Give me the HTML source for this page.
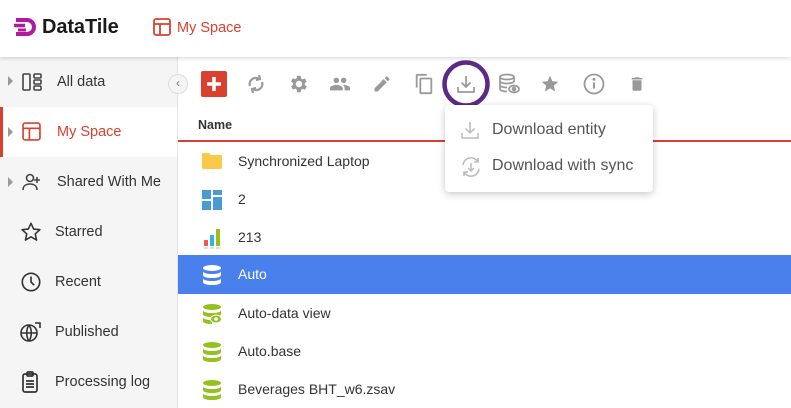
<!DOCTYPE html>
<html><head><style>
*{margin:0;padding:0;box-sizing:border-box}
body{width:791px;height:408px;overflow:hidden;background:#fff;font-family:"Liberation Sans",sans-serif;position:relative}
.hdr{position:absolute;left:0;top:0;width:791px;height:57px;background:#fff;box-shadow:0 1px 4px rgba(0,0,0,.18);z-index:3}
.side{position:absolute;left:0;top:57px;width:178px;height:351px;background:#f5f5f5;border-right:1px solid #e3e3e3}
.item{position:absolute;left:0;width:177px;height:50px;font-size:14.5px;color:#333}
.item span{position:absolute;top:17px}
.item svg{position:absolute}
.abs{position:absolute}
.tb svg{position:absolute;top:73px}
.row{position:absolute;left:178px;width:613px;height:38px;font-size:14px;color:#333}
.row span{position:absolute;left:60px;top:11px}
.row svg{position:absolute;left:23px;top:9px}
</style></head><body>
<div class="hdr">
<svg class="abs" style="left:14px;top:17px" width="24" height="20" viewBox="0 0 24 20"><path d="M2 3h11a7 7 0 0 1 0 14H2" fill="none" stroke="#b4189f" stroke-width="4"/><path d="M0 8.5h11" stroke="#b4189f" stroke-width="3.5"/><path d="M4 13h8" stroke="#b4189f" stroke-width="3"/></svg>
<div class="abs" style="left:42px;top:16px;font-size:20px;font-weight:bold;color:#1a1a1a;letter-spacing:-.1px">DataTile</div>
<svg class="abs" style="left:153px;top:18px" width="18" height="18" viewBox="0 0 18 18"><rect x="1" y="1" width="16" height="16" rx="2" fill="none" stroke="#d9412e" stroke-width="1.8"/><path d="M1 6h16M7 6v11" stroke="#d9412e" stroke-width="1.8"/></svg>
<div class="abs" style="left:177px;top:20px;font-size:14.5px;color:#d9412e">My Space</div>
</div>
<div class="side">
<div class="item" style="top:0"><svg style="left:8px;top:19px" width="6" height="10"><path d="M0 0l5 5-5 5z" fill="#999"/></svg><svg style="left:22px;top:15px" width="20" height="20" viewBox="0 0 20 20" fill="none" stroke="#444" stroke-width="1.6"><rect x="1" y="2" width="7" height="16" rx="1"/><rect x="12" y="2" width="7" height="4" rx="1"/><rect x="12" y="8" width="7" height="4" rx="1"/><rect x="12" y="14" width="7" height="4" rx="1"/></svg><span style="left:57px">All data</span></div>
<div class="item" style="top:50px;background:#fff;border-left:3px solid #d9412e;color:#d9412e"><svg style="left:5px;top:20px" width="6" height="10"><path d="M0 0l5 5-5 5z" fill="#999"/></svg><svg style="left:19px;top:15px" width="19" height="19" viewBox="0 0 18 18"><rect x="1" y="1" width="16" height="16" rx="2" fill="none" stroke="#d9412e" stroke-width="1.6"/><path d="M1 6h16M7 6v11" stroke="#d9412e" stroke-width="1.6"/></svg><span style="left:54px">My Space</span></div>
<div class="item" style="top:100px"><svg style="left:8px;top:20px" width="6" height="10"><path d="M0 0l5 5-5 5z" fill="#999"/></svg><svg style="left:22px;top:15px" width="20" height="20" viewBox="0 0 20 20" fill="none" stroke="#444" stroke-width="1.6"><circle cx="8" cy="6" r="3.5"/><path d="M1 18c0-4 3-6 7-6s7 2 7 6M15 5v6M12 8h6"/></svg><span style="left:57px">Shared With Me</span></div>
<div class="item" style="top:150px"><svg style="left:20px;top:14px" width="22" height="22" viewBox="0 0 24 24" fill="none" stroke="#333" stroke-width="1.7"><path d="M12 2.5l2.9 6.3 6.8.7-5.1 4.6 1.5 6.7L12 17.3l-6.1 3.5 1.5-6.7-5.1-4.6 6.8-.7z" stroke-linejoin="round"/></svg><span style="left:55px">Starred</span></div>
<div class="item" style="top:200px"><svg style="left:20px;top:14px" width="22" height="22" viewBox="0 0 24 24" fill="none" stroke="#333" stroke-width="1.8"><circle cx="12" cy="12" r="9.5"/><path d="M12 6v6l3.5 3.5"/></svg><span style="left:55px">Recent</span></div>
<div class="item" style="top:250px"><svg style="left:19px;top:14px" width="24" height="22" viewBox="0 0 24 22" fill="none" stroke="#333" stroke-width="1.6"><circle cx="10" cy="12" r="8"/><path d="M2 12h16M10 4c-3 4-3 12 0 16M10 4c3 4 3 12 0 16M16 2h5v5"/></svg><span style="left:55px">Published</span></div>
<div class="item" style="top:300px"><svg style="left:21px;top:14px" width="18" height="22" viewBox="0 0 18 22" fill="none" stroke="#333" stroke-width="1.7"><rect x="2" y="3" width="14" height="18" rx="2"/><rect x="6" y="1" width="6" height="4" rx="1"/><path d="M5 10h8M5 13h8M5 16h8"/></svg><span style="left:55px">Processing log</span></div>
</div>
<div class="abs" style="left:168px;top:74px;width:20px;height:20px;border-radius:50%;background:#f5f5f5;border:1px solid #ddd;font-size:12px;color:#777;text-align:center;line-height:17px">‹</div>
<div class="tb">
<div class="abs" style="left:201px;top:71px;width:26px;height:26px;background:#d9412e;border-radius:2px"></div>
<svg class="abs" style="left:201px;top:71px" width="26" height="26"><path d="M13 6v14M6 13h14" stroke="#fff" stroke-width="3.5"/></svg>
<svg style="left:246px" width="20" height="22" viewBox="0 0 20 22" fill="none" stroke="#999" stroke-width="2.2"><path d="M4 13a6 6 0 0 1 9-7M16 9a6 6 0 0 1-9 7"/><path d="M13 2l1 4-4 1M7 20l-1-4 4-1"/></svg>
<svg style="left:287px" width="22" height="22" viewBox="0 0 24 24"><path fill="#999" d="M19.4 13a7.5 7.5 0 0 0 0-2l2.1-1.6-2-3.5-2.5 1a7 7 0 0 0-1.7-1L15 3h-4l-.4 2.7a7 7 0 0 0-1.7 1l-2.5-1-2 3.5L6.6 11a7.5 7.5 0 0 0 0 2l-2.1 1.6 2 3.5 2.5-1a7 7 0 0 0 1.7 1L11 21h4l.4-2.7a7 7 0 0 0 1.7-1l2.5 1 2-3.5zM13 15.5a3.5 3.5 0 1 1 0-7 3.5 3.5 0 0 1 0 7z"/></svg>
<svg style="left:329px" width="22" height="22" viewBox="0 0 24 24"><path fill="#999" d="M16 11a3 3 0 1 0 0-6 3 3 0 0 0 0 6zm-8 0a3 3 0 1 0 0-6 3 3 0 0 0 0 6zm0 2c-2.3 0-7 1.2-7 3.5V19h14v-2.5C15 14.2 10.3 13 8 13zm8 0h-1c1.2.8 2 2 2 3.5V19h6v-2.5c0-2.3-4.7-3.5-7-3.5z"/></svg>
<svg style="left:372px" width="20" height="22" viewBox="0 0 24 24"><path fill="#999" d="M3 17.2V21h3.8L17.8 10l-3.8-3.8zM20.7 7a1 1 0 0 0 0-1.4l-2.3-2.3a1 1 0 0 0-1.4 0l-1.8 1.8 3.8 3.8z"/></svg>
<svg style="left:413px" width="22" height="22" viewBox="0 0 24 24" fill="none" stroke="#999" stroke-width="2"><path d="M15 2H5a1 1 0 0 0-1 1v13"/><rect x="8" y="6" width="12" height="16" rx="1"/></svg>
<svg style="left:456px" width="20" height="22" viewBox="0 0 20 22" fill="none" stroke="#999" stroke-width="1.7"><path d="M10 3v11M5.5 9.5 10 14l4.5-4.5M2 14v5h16v-5"/></svg>
<svg style="left:498px" width="22" height="22" viewBox="0 0 22 22" fill="none" stroke="#999" stroke-width="1.7"><ellipse cx="9" cy="4" rx="7" ry="2.5"/><path d="M2 4v12c0 1.4 3 2.5 7 2.5M16 4v5M2 8c0 1.4 3 2.5 7 2.5s7-1 7-2.5M2 12c0 1.4 3 2.5 7 2.5"/><ellipse cx="16" cy="16" rx="5" ry="3.5"/><circle cx="16" cy="16" r="1.5" fill="#999"/></svg>
<svg style="left:540px" width="20" height="22" viewBox="0 0 24 24"><path fill="#999" d="M12 17.3l6.2 3.7-1.6-7 5.4-4.7-7.2-.6L12 2 9.2 8.7 2 9.3l5.4 4.7-1.6 7z"/></svg>
<svg style="left:583px" width="22" height="22" viewBox="0 0 22 22" fill="none" stroke="#999" stroke-width="1.8"><circle cx="11" cy="11" r="9.5"/><path d="M11 9.5v6" stroke-width="2"/><circle cx="11" cy="6.3" r=".6" fill="#999"/></svg>
<svg style="left:628px" width="18" height="22" viewBox="0 0 24 24"><path fill="#999" d="M6 19a2 2 0 0 0 2 2h8a2 2 0 0 0 2-2V7H6zM19 4h-3.5l-1-1h-5l-1 1H5v2h14z"/></svg>
</div>
<svg class="abs" style="left:440px;top:58px" width="52" height="52"><circle cx="26" cy="26" r="21.5" fill="none" stroke="#5c2a86" stroke-width="4.5"/></svg>
<div class="abs" style="left:198px;top:118px;font-size:12.5px;font-weight:bold;color:#333">Name</div>
<div class="abs" style="left:178px;top:140px;width:613px;height:2px;background:#d9412e"></div>
<div class="row" style="top:142px"><svg width="22" height="20" viewBox="0 0 22 20"><path d="M1 3a1 1 0 0 1 1-1h6l2 2h10a1 1 0 0 1 1 1v12a1 1 0 0 1-1 1H2a1 1 0 0 1-1-1z" fill="#fbc94a"/></svg><span>Synchronized Laptop</span></div>
<div class="row" style="top:180px"><svg width="22" height="22" viewBox="0 0 22 22" fill="#4a9ad6"><rect x="1" y="1" width="9" height="9"/><rect x="12" y="1" width="9" height="5"/><rect x="12" y="8" width="9" height="13"/><rect x="1" y="12" width="9" height="9"/></svg><span>2</span></div>
<div class="row" style="top:218px"><svg width="22" height="22" viewBox="0 0 22 22"><rect x="3" y="13" width="4" height="6" fill="#ef5a4c"/><rect x="9" y="8" width="4" height="11" fill="#36b0e8"/><rect x="15" y="2" width="4" height="17" fill="#94c11f"/><path d="M3 21h16" stroke="#bbb" stroke-dasharray="4 2"/></svg><span>213</span></div>
<div class="row" style="top:255px;background:#4a80ec;color:#fff;height:39px"><svg width="22" height="22" viewBox="0 0 22 22" fill="#fff"><ellipse cx="11" cy="4" rx="9" ry="3"/><path d="M2 7c0 2 4 3 9 3s9-1 9-3v4c0 2-4 3-9 3s-9-1-9-3zM2 14c0 2 4 3 9 3s9-1 9-3v4c0 2-4 3-9 3s-9-1-9-3z"/></svg><span>Auto</span></div>
<div class="row" style="top:294px"><svg width="22" height="22" viewBox="0 0 22 22" fill="#94c11f"><ellipse cx="11" cy="4" rx="9" ry="3"/><path d="M2 7c0 2 4 3 9 3s9-1 9-3v4c0 2-4 3-9 3s-9-1-9-3zM2 14c0 2 4 3 9 3v4c-5 0-9-1-9-3z"/><ellipse cx="15" cy="16" rx="6" ry="4.5" fill="#fff"/><ellipse cx="15" cy="16" rx="5" ry="3.5"/><circle cx="15" cy="16" r="1.8" fill="#fff"/></svg><span>Auto-data view</span></div>
<div class="row" style="top:332px"><svg width="22" height="22" viewBox="0 0 22 22" fill="#94c11f"><ellipse cx="11" cy="4" rx="9" ry="3"/><path d="M2 7c0 2 4 3 9 3s9-1 9-3v4c0 2-4 3-9 3s-9-1-9-3zM2 14c0 2 4 3 9 3s9-1 9-3v4c0 2-4 3-9 3s-9-1-9-3z"/></svg><span>Auto.base</span></div>
<div class="row" style="top:370px"><svg width="22" height="22" viewBox="0 0 22 22" fill="#94c11f"><ellipse cx="11" cy="4" rx="9" ry="3"/><path d="M2 7c0 2 4 3 9 3s9-1 9-3v4c0 2-4 3-9 3s-9-1-9-3zM2 14c0 2 4 3 9 3s9-1 9-3v4c0 2-4 3-9 3s-9-1-9-3z"/></svg><span>Beverages BHT_w6.zsav</span></div>
<div class="abs" style="left:445px;top:105px;width:208px;height:87px;background:#fff;border-radius:4px;box-shadow:0 2px 8px rgba(0,0,0,.22);z-index:4">
<svg class="abs" style="left:15px;top:15px" width="20" height="20" viewBox="0 0 20 20" fill="none" stroke="#bbb" stroke-width="1.5"><path d="M10 2v11M5.5 8.5 10 13l4.5-4.5M2 13v5h16v-5"/></svg>
<div class="abs" style="left:47px;top:16px;font-size:16px;color:#555">Download entity</div>
<svg class="abs" style="left:15px;top:51px" width="22" height="22" viewBox="0 0 22 22" fill="none" stroke="#bbb" stroke-width="1.5"><path d="M3 9a8 8 0 0 1 15-3M19 13a8 8 0 0 1-15 3M18 2v4h-4M4 20v-4h4M11 7v8M8 12l3 3 3-3"/></svg>
<div class="abs" style="left:47px;top:52px;font-size:16px;color:#555">Download with sync</div>
</div>
</body></html>
